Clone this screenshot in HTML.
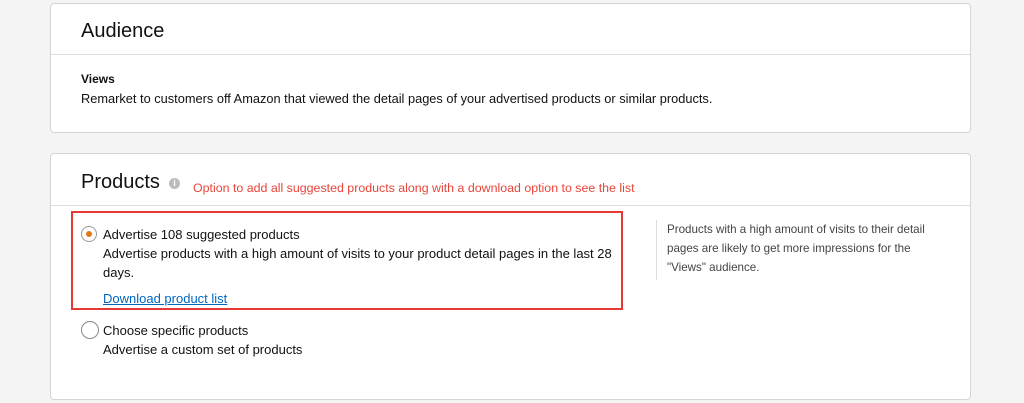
<!DOCTYPE html>
<html><head><style>
body{margin:0;width:1024px;height:403px;background:#f4f4f4;font-family:"Liberation Sans",sans-serif;color:#111;position:relative;overflow:hidden}
.card{position:absolute;left:50px;width:919px;background:#fff;border:1px solid #d5d5d5;border-radius:4px}
.hd{position:absolute;left:30px;font-size:20px}
.line{position:absolute;left:0;right:0;height:1px;background:#ddd}
.t{position:absolute;font-size:13px;white-space:nowrap}
.radio{position:absolute;width:16px;height:16px;border:1px solid #888;border-radius:50%;box-sizing:border-box;background:#fff}
</style></head><body>
<div class="card" style="top:3px;height:128px">
<div class="hd" style="top:16px">Audience</div>
<div class="line" style="top:50px"></div>
<div class="t" style="left:30px;top:68px;font-weight:bold;font-size:12px">Views</div>
<div class="t" style="left:30px;top:87px;font-size:12.8px">Remarket to customers off Amazon that viewed the detail pages of your advertised products or similar products.</div>
</div>
<div class="card" style="top:153px;height:245px">
<div class="hd" style="top:17px">Products</div>
<div style="position:absolute;left:118px;top:24px;width:11px;height:11px;border-radius:50%;background:#bbb;color:#fff;font-size:9px;text-align:center;line-height:11px;font-weight:bold">i</div>
<div class="t" style="left:142px;top:27px;color:#e8443a;font-size:12.4px">Option to add all suggested products along with a download option to see the list</div>
<div class="line" style="top:51px"></div>
<div style="position:absolute;left:20px;top:57px;width:548px;height:95px;border:2px solid #e53935"></div>
<div class="radio" style="left:30px;top:72px;border-color:#999"><div style="position:absolute;left:4px;top:4px;width:6px;height:6px;border-radius:50%;background:#e47911"></div></div>
<div class="t" style="left:52px;top:73px">Advertise 108 suggested products</div>
<div class="t" style="left:52px;top:92px">Advertise products with a high amount of visits to your product detail pages in the last 28</div>
<div class="t" style="left:52px;top:111px">days.</div>
<div class="t" style="left:52px;top:137px;color:#0066c0;text-decoration:underline">Download product list</div>
<div class="radio" style="left:30px;top:167px;width:18px;height:18px"></div>
<div class="t" style="left:52px;top:169px">Choose specific products</div>
<div class="t" style="left:52px;top:188px">Advertise a custom set of products</div>
<div style="position:absolute;left:605px;top:66px;width:1px;height:60px;background:#ddd"></div>
<div class="t" style="left:616px;top:66px;font-size:11.6px;color:#444;line-height:19px">Products with a high amount of visits to their detail<br>pages are likely to get more impressions for the<br>"Views" audience.</div>
</div>
</body></html>
